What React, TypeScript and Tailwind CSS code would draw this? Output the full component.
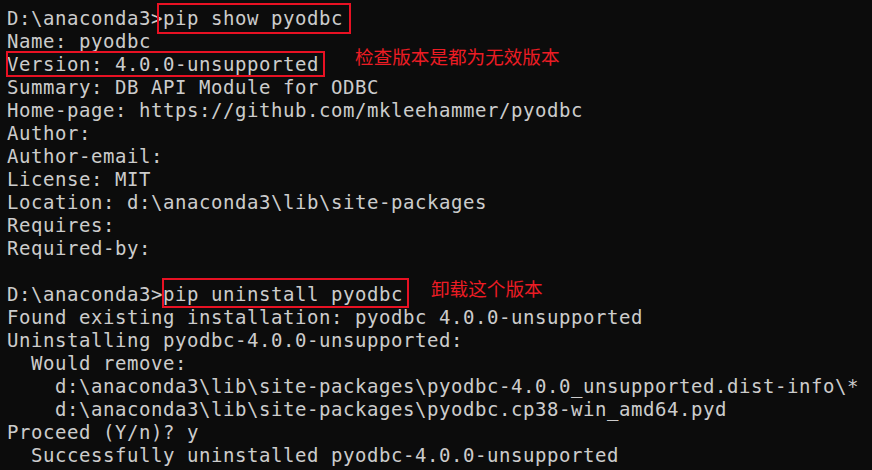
type Seg = { text: string; box?: string };

const lines: Seg[][] = [
  [{ text: 'D:\\anaconda3>' }, { text: 'pip show pyodbc', box: '-top-[4px] -bottom-[4px] -left-[6px] -right-[8px]' }],
  [{ text: 'Name: pyodbc' }],
  [{ text: 'Version: 4.0.0-unsupported', box: '-top-[2px] -bottom-[1px] -left-[1px] -right-[6px]' }],
  [{ text: 'Summary: DB API Module for ODBC' }],
  [{ text: 'Home-page: https://github.com/mkleehammer/pyodbc' }],
  [{ text: 'Author:' }],
  [{ text: 'Author-email:' }],
  [{ text: 'License: MIT' }],
  [{ text: 'Location: d:\\anaconda3\\lib\\site-packages' }],
  [{ text: 'Requires:' }],
  [{ text: 'Required-by:' }],
  [{ text: '' }],
  [{ text: 'D:\\anaconda3>' }, { text: 'pip uninstall pyodbc', box: '-top-[5px] -bottom-[2px] -left-[1px] -right-[6px]' }],
  [{ text: 'Found existing installation: pyodbc 4.0.0-unsupported' }],
  [{ text: 'Uninstalling pyodbc-4.0.0-unsupported:' }],
  [{ text: '  Would remove:' }],
  [{ text: '    d:\\anaconda3\\lib\\site-packages\\pyodbc-4.0.0_unsupported.dist-info\\*' }],
  [{ text: '    d:\\anaconda3\\lib\\site-packages\\pyodbc.cp38-win_amd64.pyd' }],
  [{ text: 'Proceed (Y/n)? y' }],
  [{ text: '  Successfully uninstalled pyodbc-4.0.0-unsupported' }],
];

export default function App() {
  return (
    <div className="relative w-[872px] h-[470px] overflow-hidden bg-[#0c0c0c] pt-[7px] pl-[7px]">
      <div className="font-['DejaVu_Sans_Mono',monospace] text-[19px] tracking-[0.56px] text-[#cccccc]">
        {lines.map((line, i) => (
          <div key={i} className="h-[23px] leading-[23px] whitespace-pre">
            {line.map((seg, j) =>
              seg.box ? (
                <span key={j} className="relative inline-block h-[23px] align-top">
                  {seg.text}
                  <span className={`absolute border-2 border-[#e81123] ${seg.box}`} />
                </span>
              ) : (
                <span key={j}>{seg.text}</span>
              )
            )}
          </div>
        ))}
      </div>

      <div className="absolute left-[355px] top-[47px] font-['Noto_Sans_CJK_SC',sans-serif] text-[18.6px] leading-[18px] text-[#ec1c24] whitespace-nowrap">
        检查版本是都为无效版本
      </div>
      <div className="absolute left-[431px] top-[279px] font-['Noto_Sans_CJK_SC',sans-serif] text-[18.6px] leading-[18px] text-[#ec1c24] whitespace-nowrap">
        卸载这个版本
      </div>
    </div>
  );
}
